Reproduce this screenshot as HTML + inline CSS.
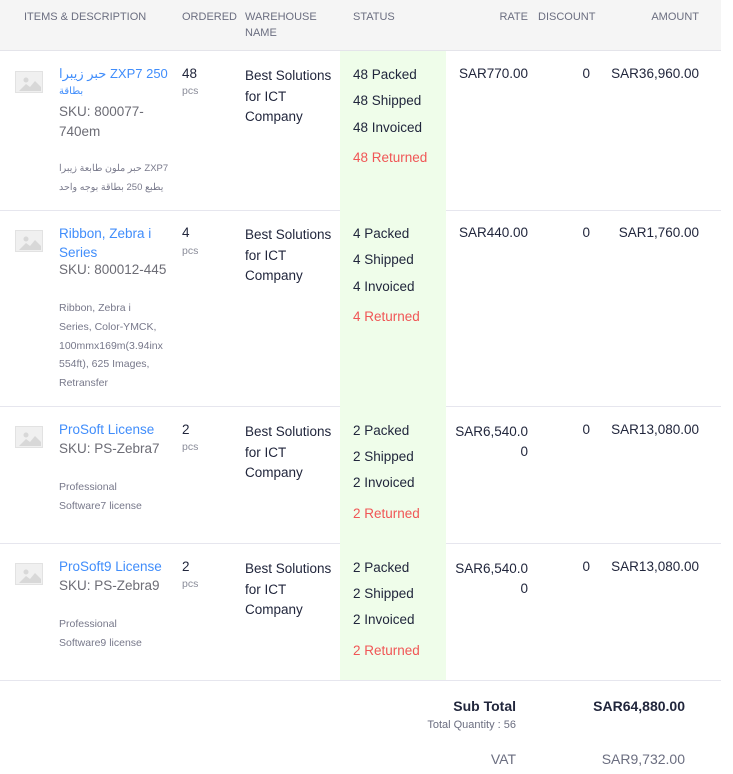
<!DOCTYPE html>
<html><head><meta charset="utf-8"><style>
*{margin:0;padding:0;box-sizing:border-box}
body{width:733px;height:774px;background:#fff;font-family:"Liberation Sans","Noto Sans CJK SC",sans-serif;color:#21263c;position:relative;overflow:hidden;font-size:13.5px}
.a{position:absolute;white-space:nowrap}
.hd{position:absolute;left:0;top:0;width:721px;height:51px;background:#f5f5f5;border-bottom:1px solid #e4e4ea}
.h{position:absolute;font-size:11px;color:#6b6e80;line-height:16px;top:9px}
.row{position:absolute;left:0;width:721px;border-bottom:1px solid #e6e6ee}
.st{position:absolute;left:340px;width:106px;top:0;bottom:0;background:#effdea}
.img{position:absolute;left:15px;top:20px;width:28px;height:22px;border:1px solid #e2e2e2;background:#f0f0f0}
.img svg{position:absolute;left:3px;top:3px}
.lk{color:#408dfb}
.sku{color:#6c6c75}
.ds{font-size:10.5px;color:#77788a}
.pcs{font-size:10.5px;color:#8a8c99}
.red{color:#f05656}
.r{text-align:right}
</style></head><body>
<div class="hd">
<div class="h" style="left:24px">ITEMS &amp; DESCRIPTION</div>
<div class="h" style="left:182px">ORDERED</div>
<div class="h" style="left:245px">WAREHOUSE<br>NAME</div>
<div class="h" style="left:353px">STATUS</div>
<div class="h" style="left:440px;width:88px;text-align:right">RATE</div>
<div class="h" style="left:538px">DISCOUNT</div>
<div class="h" style="left:600px;width:99px;text-align:right">AMOUNT</div>
</div>

<div class="row" style="top:51px;height:160px">
<div class="st"></div>
<div class="img"><svg width="22" height="16" viewBox="0 0 22 16"><circle cx="7" cy="5" r="2.5" fill="#d8d8d8"/><path d="M0 16 L7 9 L11 12 L16 6 L22 12 L22 16Z" fill="#d8d8d8"/></svg></div>
<div class="a lk" style="left:59px;top:15px;font-size:13px">حبر زيبرا ZXP7 250</div>
<div class="a lk" style="left:59px;top:35px;font-size:10px">بطاقة</div>
<div class="a sku" style="left:59px;top:51px;line-height:20px">SKU: 800077-<br>740em</div>
<div class="a ds" style="left:59px;top:108px;line-height:19px;font-size:9.5px">حبر ملون طابعة زيبرا ZXP7<br>يطبع 250 بطاقة بوجه واحد</div>
<div class="a" style="left:182px;top:15px">48</div>
<div class="a pcs" style="left:182px;top:34px">pcs</div>
<div class="a" style="left:245px;top:15px;line-height:20.5px">Best Solutions<br>for ICT<br>Company</div>
<div class="a" style="left:353px;top:16px">48 Packed</div>
<div class="a" style="left:353px;top:42px">48 Shipped</div>
<div class="a" style="left:353px;top:69px">48 Invoiced</div>
<div class="a red" style="left:353px;top:99px">48 Returned</div>
<div class="a r" style="left:440px;width:88px;top:15px">SAR770.00</div>
<div class="a r" style="left:540px;width:50px;top:15px">0</div>
<div class="a r" style="left:600px;width:99px;top:15px">SAR36,960.00</div>
</div>

<div class="row" style="top:210px;height:197px">
<div class="st"></div>
<div class="img"><svg width="22" height="16" viewBox="0 0 22 16"><circle cx="7" cy="5" r="2.5" fill="#d8d8d8"/><path d="M0 16 L7 9 L11 12 L16 6 L22 12 L22 16Z" fill="#d8d8d8"/></svg></div>
<div class="a lk" style="left:59px;top:14px;line-height:19px">Ribbon, Zebra i<br>Series</div>
<div class="a sku" style="left:59px;top:52px">SKU: 800012-445</div>
<div class="a ds" style="left:59px;top:89px;line-height:18.8px">Ribbon, Zebra i<br>Series, Color-YMCK,<br>100mmx169m(3.94inx<br>554ft), 625 Images,<br>Retransfer</div>
<div class="a" style="left:182px;top:15px">4</div>
<div class="a pcs" style="left:182px;top:35px">pcs</div>
<div class="a" style="left:245px;top:15px;line-height:20.5px">Best Solutions<br>for ICT<br>Company</div>
<div class="a" style="left:353px;top:16px">4 Packed</div>
<div class="a" style="left:353px;top:42px">4 Shipped</div>
<div class="a" style="left:353px;top:69px">4 Invoiced</div>
<div class="a red" style="left:353px;top:99px">4 Returned</div>
<div class="a r" style="left:440px;width:88px;top:15px">SAR440.00</div>
<div class="a r" style="left:540px;width:50px;top:15px">0</div>
<div class="a r" style="left:600px;width:99px;top:15px">SAR1,760.00</div>
</div>

<div class="row" style="top:406px;height:138px">
<div class="st"></div>
<div class="img"><svg width="22" height="16" viewBox="0 0 22 16"><circle cx="7" cy="5" r="2.5" fill="#d8d8d8"/><path d="M0 16 L7 9 L11 12 L16 6 L22 12 L22 16Z" fill="#d8d8d8"/></svg></div>
<div class="a lk" style="left:59px;top:16px">ProSoft License</div>
<div class="a sku" style="left:59px;top:35px">SKU: PS-Zebra7</div>
<div class="a ds" style="left:59px;top:72px;line-height:19px">Professional<br>Software7 license</div>
<div class="a" style="left:182px;top:16px">2</div>
<div class="a pcs" style="left:182px;top:35px">pcs</div>
<div class="a" style="left:245px;top:16px;line-height:20.5px">Best Solutions<br>for ICT<br>Company</div>
<div class="a" style="left:353px;top:17px">2 Packed</div>
<div class="a" style="left:353px;top:43px">2 Shipped</div>
<div class="a" style="left:353px;top:69px">2 Invoiced</div>
<div class="a red" style="left:353px;top:100px">2 Returned</div>
<div class="a r" style="left:440px;width:88px;top:16px;white-space:normal;line-height:20px">SAR6,540.0<br>0</div>
<div class="a r" style="left:540px;width:50px;top:16px">0</div>
<div class="a r" style="left:600px;width:99px;top:16px">SAR13,080.00</div>
</div>

<div class="row" style="top:543px;height:138px">
<div class="st"></div>
<div class="img"><svg width="22" height="16" viewBox="0 0 22 16"><circle cx="7" cy="5" r="2.5" fill="#d8d8d8"/><path d="M0 16 L7 9 L11 12 L16 6 L22 12 L22 16Z" fill="#d8d8d8"/></svg></div>
<div class="a lk" style="left:59px;top:16px">ProSoft9 License</div>
<div class="a sku" style="left:59px;top:35px">SKU: PS-Zebra9</div>
<div class="a ds" style="left:59px;top:72px;line-height:19px">Professional<br>Software9 license</div>
<div class="a" style="left:182px;top:16px">2</div>
<div class="a pcs" style="left:182px;top:35px">pcs</div>
<div class="a" style="left:245px;top:16px;line-height:20.5px">Best Solutions<br>for ICT<br>Company</div>
<div class="a" style="left:353px;top:17px">2 Packed</div>
<div class="a" style="left:353px;top:43px">2 Shipped</div>
<div class="a" style="left:353px;top:69px">2 Invoiced</div>
<div class="a red" style="left:353px;top:100px">2 Returned</div>
<div class="a r" style="left:440px;width:88px;top:16px;white-space:normal;line-height:20px">SAR6,540.0<br>0</div>
<div class="a r" style="left:540px;width:50px;top:16px">0</div>
<div class="a r" style="left:600px;width:99px;top:16px">SAR13,080.00</div>
</div>

<div class="a r" style="left:400px;width:116px;top:698px;font-weight:bold;font-size:14px">Sub Total</div>
<div class="a r" style="left:400px;width:116px;top:719px;font-size:11px;color:#6b6e80">Total Quantity : 56</div>
<div class="a r" style="left:560px;width:125px;top:698px;font-weight:bold;font-size:14px">SAR64,880.00</div>
<div class="a r" style="left:400px;width:116px;top:751px;font-size:14px;color:#6b6e80">VAT</div>
<div class="a r" style="left:560px;width:125px;top:751px;font-size:14px;color:#6b6e80">SAR9,732.00</div>
</body></html>
